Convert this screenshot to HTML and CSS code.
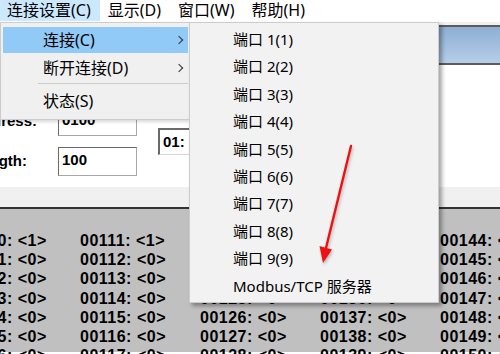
FILE: index.html
```html
<!DOCTYPE html>
<html lang="zh-CN">
<head>
    <meta charset="UTF-8">
    <title>Modbus Poll</title>
    <link rel="stylesheet" href="styles.css">
</head>
<body>
    <div class="menubar">
        <span class="menubar-item active">连接设置(C)</span>
        <span class="menubar-item">显示(D)</span>
        <span class="menubar-item">窗口(W)</span>
        <span class="menubar-item">帮助(H)</span>
    </div>

    <div class="window">
        <div class="window-top"></div>
        <div class="caption"></div>
        <div class="form">
            <div class="fields">
                <div class="field-row">
                    <span class="field-label">Address:</span>
                    <span class="field-box">0100</span>
                </div>
                <div class="field-row">
                    <span class="field-label">Length:</span>
                    <span class="field-box">100</span>
                </div>
            </div>
            <div class="list-box">01:</div>
        </div>
        <div class="band"></div>
        <div class="grid" id="grid"></div>
    </div>

    <div class="menu">
        <div class="menu-item selected">连接(C)<span class="menu-arrow"></span></div>
        <div class="menu-item">断开连接(D)<span class="menu-arrow"></span></div>
        <div class="menu-sep"></div>
        <div class="menu-item">状态(S)</div>
    </div>

    <div class="submenu">
        <div class="submenu-item">端口 1(1)</div>
        <div class="submenu-item">端口 2(2)</div>
        <div class="submenu-item">端口 3(3)</div>
        <div class="submenu-item">端口 4(4)</div>
        <div class="submenu-item">端口 5(5)</div>
        <div class="submenu-item">端口 6(6)</div>
        <div class="submenu-item">端口 7(7)</div>
        <div class="submenu-item">端口 8(8)</div>
        <div class="submenu-item">端口 9(9)</div>
        <div class="submenu-item">Modbus/TCP 服务器</div>
    </div>

    <svg class="pointer" width="500" height="354" viewBox="0 0 500 354">
        <line x1="351" y1="146" x2="325.5" y2="250" stroke="#f01010" stroke-width="2.4" stroke-linecap="round"/>
        <polygon points="323,263 319.5,246 332,249.5" fill="#f01010"/>
    </svg>

    <script>
        // coil columns, 11 addresses per column
        const grid = document.getElementById('grid');
        for (let c = 0; c < 5; c++) {
            const col = document.createElement('div');
            col.className = 'grid-col';
            for (let r = 0; r < 8; r++) {
                const addr = 100 + c * 11 + r;
                const val = (addr === 100 || addr === 111) ? 1 : 0;
                const cell = document.createElement('div');
                cell.className = 'grid-cell';
                cell.textContent = '00' + addr + ': <' + val + '>';
                col.appendChild(cell);
            }
            grid.appendChild(col);
        }
    </script>
</body>
</html>
```

FILE: styles.css
```css
body {
    margin: 0;
    width: 500px;
    height: 354px;
    overflow: hidden;
    position: relative;
    background-color: #ffffff;
    font-family: "Noto Sans", "Noto Sans CJK SC", sans-serif;
    color: #000;
}
.menubar {
    display: flex;
    height: 22px;
    background-color: #ffffff;
    font-size: 16px;
}
.menubar-item {
    height: 21px;
    line-height: 21px;
    padding: 0 9px 0 7px;
    margin-right: 1px;
}
.menubar-item.active {
    background-color: #cce8ff;
}
.window-top {
    height: 3px;
    background-color: #f0f0f0;
}
.caption {
    height: 36px;
    border-top: 2px solid #5c5c5c;
    border-bottom: 2px solid #5c5c5c;
    background: linear-gradient(#8eaed2, #b6cee8);
}
.form {
    display: flex;
    align-items: flex-start;
    height: 122px;
    box-sizing: border-box;
    padding-top: 42px;
    background-color: #ffffff;
    font-family: "Liberation Sans", Arial, sans-serif;
    font-weight: bold;
    font-size: 15px;
}
.fields {
    display: flex;
    flex-direction: column;
    gap: 11px;
    margin-left: -28px;
}
.field-row {
    display: flex;
    align-items: center;
}
.field-label {
    width: 86px;
    margin-top: -2px;
}
.field-box {
    width: 79px;
    height: 29px;
    line-height: 23px;
    box-sizing: border-box;
    padding-left: 3px;
    border: 1px solid;
    border-color: #6a6a6a #a8a8a8 #a8a8a8 #6a6a6a;
}
.list-box {
    width: 200px;
    height: 27px;
    line-height: 24px;
    margin: 21px 0 0 21px;
    box-sizing: border-box;
    padding-left: 3px;
    border-top: 2px solid #6a6a6a;
    border-left: 2px solid #6a6a6a;
    border-right: 1px solid #d4d4d4;
    border-bottom: 1px solid #d4d4d4;
}
.band {
    height: 20px;
    background-color: #f0f0f0;
}
.grid {
    display: flex;
    margin-left: -40px;
    height: 145px;
    box-sizing: border-box;
    padding-top: 22px;
    border-top: 2px solid #333;
    background-color: #c0c0c0;
    font-family: "Liberation Sans", Arial, sans-serif;
    font-weight: bold;
    font-size: 16px;
    letter-spacing: 0.5px;
}
.grid-col {
    flex: 0 0 120px;
}
.grid-cell {
    height: 19.2px;
    line-height: 19.2px;
    white-space: nowrap;
}
.menu {
    position: absolute;
    left: 0;
    top: 22px;
    width: 190px;
    box-sizing: border-box;
    padding: 4px 1px 3px 2px;
    border: 1px solid #cccccc;
    background-color: #f0f0f0;
    box-shadow: 2px 2px 3px rgba(0,0,0,0.15);
    font-size: 16px;
}
.menu-item {
    position: relative;
    height: 26px;
    line-height: 26px;
    padding-left: 40px;
    margin-bottom: 2px;
}
.menu-item.selected {
    background-color: #91c9f7;
}
.menu-arrow {
    position: absolute;
    right: 6px;
    top: 10px;
    width: 5px;
    height: 5px;
    border-top: 1.3px solid #333;
    border-right: 1.3px solid #333;
    transform: rotate(45deg);
}
.menu-sep {
    height: 1px;
    margin: 2px 0 4px 35px;
    background-color: #cccccc;
}
.submenu {
    position: absolute;
    left: 189px;
    top: 22px;
    width: 250px;
    box-sizing: border-box;
    padding: 3px 1px 2px 2px;
    border: 1px solid #cccccc;
    background-color: #f2f2f2;
    box-shadow: 3px 3px 4px rgba(0,0,0,0.35);
    font-size: 15px;
}
.submenu-item {
    height: 27.4px;
    line-height: 27.4px;
    padding-left: 41px;
    white-space: nowrap;
}
.pointer {
    position: absolute;
    left: 0;
    top: 0;
    filter: drop-shadow(1px 2px 1.5px rgba(0,0,0,0.25));
}
```
